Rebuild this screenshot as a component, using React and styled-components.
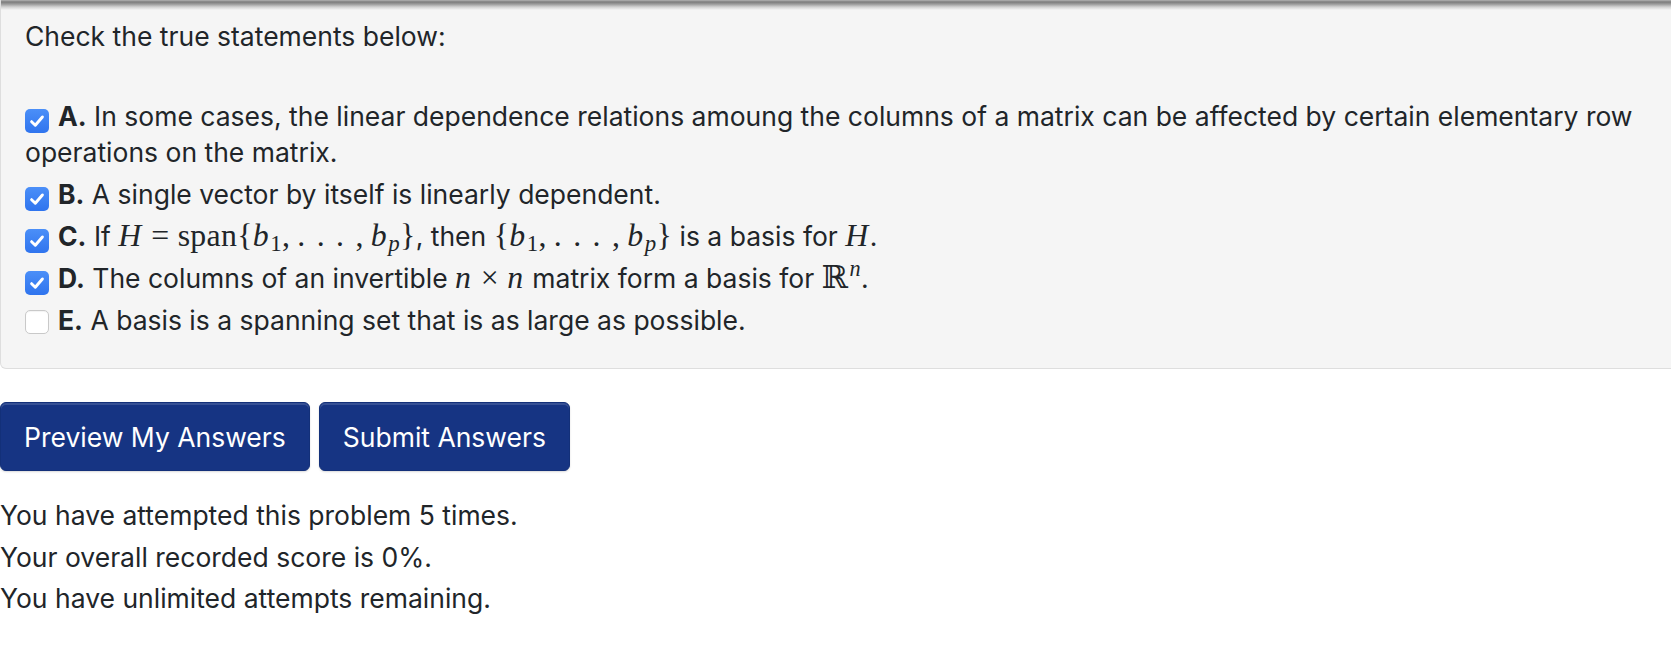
import React from "react";
import styled, { createGlobalStyle } from "styled-components";

const GlobalStyle = createGlobalStyle`
  body {
    margin: 0;
    background: #fff;
    font-family: Inter, "Liberation Sans", sans-serif;
    font-size: 26.5px;
    color: #212529;
  }
`;

const Page = styled.div`
  overflow: hidden;
  padding-bottom: 20px;
`;

const Panel = styled.div`
  margin-right: -12px;
  padding: 18px 24px 30px 24px;
  background-color: #f5f5f5;
  background-image: linear-gradient(
    to bottom,
    #b4b4b4 0px,
    #7c7c7c 2px,
    #999 4px,
    #d2d2d2 7px,
    #f5f5f5 10px
  );
  background-repeat: no-repeat;
  background-size: 100% 10px;
  border: 1px solid #dedede;
  border-top: none;
  border-radius: 0 0 6px 6px;
`;

const Prompt = styled.div`
  line-height: 36px;
`;

const OptionList = styled.div`
  margin-top: 44px;
`;

const Option = styled.label`
  display: block;
  line-height: 36px;
  margin-top: 6px;
`;

const Box = styled.span`
  display: inline-flex;
  align-items: center;
  justify-content: center;
  box-sizing: border-box;
  width: 24px;
  height: 24px;
  margin-right: 9px;
  vertical-align: -4px;
  border-radius: 5px;
  background: ${(p) =>
    p.$checked ? "linear-gradient(to bottom, #4b8ff8, #2f74ee)" : "#fff"};
  border: ${(p) => (p.$checked ? "none" : "1px solid #c9c9c9")};
  box-shadow: ${(p) =>
    p.$checked ? "none" : "inset 0 1px 1px rgba(0, 0, 0, 0.05)"};
`;

const Letter = styled.b`
  font-weight: 700;
`;

const Math = styled.span`
  font-family: "Liberation Serif", "DejaVu Serif", serif;
  font-size: 1.2em;
  line-height: 0;
  letter-spacing: 0.01em;
`;

const V = styled.i`
  font-style: italic;
  margin-right: 0.04em;
`;

const Op = styled.span`
  margin: 0 0.26em;
`;

const Comma = styled.span`
  margin-right: 0.22em;
`;

const Dots = styled.span`
  letter-spacing: 0.36em;
`;

const Sub = styled.span`
  font-size: 0.72em;
  vertical-align: -0.22em;
  font-style: ${(p) => (p.$italic ? "italic" : "normal")};
`;

const Sup = styled.i`
  font-size: 0.7em;
  vertical-align: 0.55em;
  margin-left: 0.05em;
`;

const Buttons = styled.div`
  display: flex;
  gap: 9px;
  margin-top: 33px;
`;

const Button = styled.button`
  height: 69px;
  padding: 0 23px;
  font-family: Inter, "Liberation Sans", sans-serif;
  font-size: 26.5px;
  color: #fff;
  background: #163483;
  border: 1px solid #133079;
  border-radius: 6px;
  box-shadow: inset 0 2px 0 rgba(255, 255, 255, 0.14),
    0 1px 2px rgba(0, 0, 0, 0.15);
  cursor: pointer;
`;

const StatusBlock = styled.div`
  margin-top: 24px;
`;

const Status = styled.div`
  line-height: 41.5px;
`;

const Check = () => (
  <svg width="18" height="18" viewBox="0 0 16 16">
    <path
      d="M3.2 8.6 L6.5 11.8 L12.8 4.4"
      fill="none"
      stroke="#fff"
      strokeWidth="2.6"
      strokeLinecap="round"
      strokeLinejoin="round"
    />
  </svg>
);

const bList = (
  <>
    {"{"}
    <V>b</V>
    <Sub>1</Sub>
    <Comma>,</Comma>
    <Dots>...</Dots>
    <Comma>,</Comma>
    <V>b</V>
    <Sub $italic>p</Sub>
    {"}"}
  </>
);

const options = [
  {
    letter: "A.",
    checked: true,
    text: "In some cases, the linear dependence relations amoung the columns of a matrix can be affected by certain elementary row operations on the matrix.",
  },
  {
    letter: "B.",
    checked: true,
    text: "A single vector by itself is linearly dependent.",
  },
  {
    letter: "C.",
    checked: true,
    text: (
      <>
        If{" "}
        <Math>
          <V>H</V>
          <Op>=</Op>span{bList}
        </Math>
        , then <Math>{bList}</Math> is a basis for{" "}
        <Math>
          <V>H</V>
        </Math>
        .
      </>
    ),
  },
  {
    letter: "D.",
    checked: true,
    text: (
      <>
        The columns of an invertible{" "}
        <Math>
          <V>n</V>
          <Op>×</Op>
          <V>n</V>
        </Math>{" "}
        matrix form a basis for{" "}
        <Math>
          ℝ<Sup>n</Sup>
        </Math>
        .
      </>
    ),
  },
  {
    letter: "E.",
    checked: false,
    text: "A basis is a spanning set that is as large as possible.",
  },
];

export default function App() {
  return (
    <Page>
      <GlobalStyle />
      <Panel>
        <Prompt>Check the true statements below:</Prompt>
        <OptionList>
          {options.map((o) => (
            <Option key={o.letter}>
              <Box $checked={o.checked}>{o.checked && <Check />}</Box>
              <Letter>{o.letter}</Letter> {o.text}
            </Option>
          ))}
        </OptionList>
      </Panel>
      <Buttons>
        <Button type="button">Preview My Answers</Button>
        <Button type="button">Submit Answers</Button>
      </Buttons>
      <StatusBlock>
        <Status>You have attempted this problem 5 times.</Status>
        <Status>Your overall recorded score is 0%.</Status>
        <Status>You have unlimited attempts remaining.</Status>
      </StatusBlock>
    </Page>
  );
}
